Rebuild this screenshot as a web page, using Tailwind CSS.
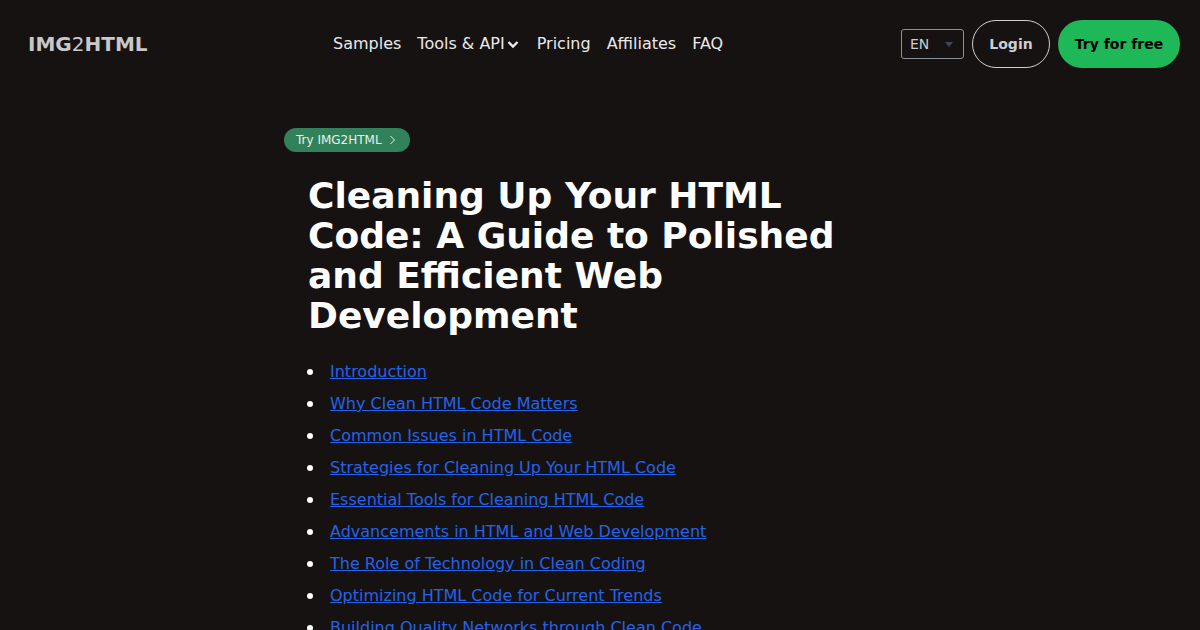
<!DOCTYPE html>
<html lang="en">
<head>
    <meta charset="UTF-8" />
    <meta name="viewport" content="width=device-width, initial-scale=1.0" />
    <title>Cleaning Up Your HTML Code</title>
    <script src="https://cdn.jsdelivr.net/npm/@tailwindcss/browser@4"></script>
</head>
<body class="bg-[#161212] h-[630px] overflow-hidden font-['DejaVu_Sans',sans-serif] text-white">
    <header class="h-[88px] pl-7 pr-5 flex items-center">
        <a href="#" class="w-[305px] text-xl font-bold text-[#c9c7c7]">IMG<span class="font-normal">2</span>HTML</a>
        <nav class="flex items-center gap-4 text-base text-[#ebe9e9]">
            <a href="#">Samples</a>
            <a href="#" class="flex items-center gap-0.5 mr-0.5">Tools &amp; API
                <svg class="w-3 h-3" viewBox="0 0 12 12" fill="none" stroke="currentColor" stroke-width="2.4"><path d="M1.5 4l4.5 4.5 4.5-4.5" /></svg>
            </a>
            <a href="#">Pricing</a>
            <a href="#">Affiliates</a>
            <a href="#">FAQ</a>
        </nav>
        <div class="ml-auto flex items-center gap-2">
            <div class="w-[63px] h-[30px] border border-[#8b8f98] rounded-[3px] pl-2 pr-2.5 flex items-center justify-between text-sm text-[#cfcdcd]">
                EN
                <span class="w-0 h-0 border-x-4 border-x-transparent border-t-[5px] border-t-[#3f4654]"></span>
            </div>
            <a href="#" class="w-[78px] h-12 border border-[#cfcdcd] rounded-3xl flex items-center justify-center text-sm font-bold text-[#cfcdcd]">Login</a>
            <a href="#" class="w-[122px] h-12 bg-[#1fb858] rounded-3xl flex items-center justify-center text-sm font-bold text-black">Try for free</a>
        </div>
    </header>

    <main class="pl-[284px] pt-10">
        <a href="#" class="w-[126px] h-6 pl-3 rounded-xl bg-[#31825a] flex items-center gap-[5px] text-xs text-[#e8f1ec]">
            Try IMG2HTML
            <svg class="w-2.5 h-2.5" viewBox="0 0 10 10" fill="none" stroke="currentColor" stroke-width="1"><path d="M3.5 1l4 4-4 4" /></svg>
        </a>
        <article class="pl-6 pt-6 w-[584px]">
            <h1 class="text-4xl leading-10 font-bold">Cleaning Up Your HTML Code: A Guide to Polished and Efficient Web Development</h1>
            <ul class="mt-5 text-base text-[#2563eb]">
                <li class="h-8 flex items-center gap-[17px]"><span class="size-1.5 -ml-px -mt-px rounded-full bg-white"></span><a href="#" class="underline">Introduction</a></li>
                <li class="h-8 flex items-center gap-[17px]"><span class="size-1.5 -ml-px -mt-px rounded-full bg-white"></span><a href="#" class="underline">Why Clean HTML Code Matters</a></li>
                <li class="h-8 flex items-center gap-[17px]"><span class="size-1.5 -ml-px -mt-px rounded-full bg-white"></span><a href="#" class="underline">Common Issues in HTML Code</a></li>
                <li class="h-8 flex items-center gap-[17px]"><span class="size-1.5 -ml-px -mt-px rounded-full bg-white"></span><a href="#" class="underline">Strategies for Cleaning Up Your HTML Code</a></li>
                <li class="h-8 flex items-center gap-[17px]"><span class="size-1.5 -ml-px -mt-px rounded-full bg-white"></span><a href="#" class="underline">Essential Tools for Cleaning HTML Code</a></li>
                <li class="h-8 flex items-center gap-[17px]"><span class="size-1.5 -ml-px -mt-px rounded-full bg-white"></span><a href="#" class="underline">Advancements in HTML and Web Development</a></li>
                <li class="h-8 flex items-center gap-[17px]"><span class="size-1.5 -ml-px -mt-px rounded-full bg-white"></span><a href="#" class="underline">The Role of Technology in Clean Coding</a></li>
                <li class="h-8 flex items-center gap-[17px]"><span class="size-1.5 -ml-px -mt-px rounded-full bg-white"></span><a href="#" class="underline">Optimizing HTML Code for Current Trends</a></li>
                <li class="h-8 flex items-center gap-[17px]"><span class="size-1.5 -ml-px -mt-px rounded-full bg-white"></span><a href="#" class="underline">Building Quality Networks through Clean Code</a></li>
            </ul>
        </article>
    </main>
</body>
</html>
